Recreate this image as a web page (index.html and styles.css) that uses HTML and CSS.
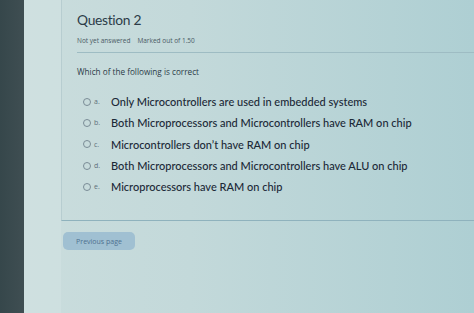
FILE: index.html
```html
<!DOCTYPE html>
<html>
<head>
<meta charset="utf-8">
<link rel="stylesheet" href="styles.css">
</head>
<body>
<div class="page">
  <div class="sidebar"></div>
  <div class="gutter"></div>
  <div class="main">
    <div class="question">
      <h2 class="qtitle">Question 2</h2>
      <div class="meta"><span>Not yet answered</span><span>Marked out of 1.50</span></div>
      <div class="content">
        <p class="prompt">Which of the following is correct</p>
        <ul class="options">
          <li class="opt"><span class="radio"></span><span class="letter">a.</span><span class="label">Only Microcontrollers are used in embedded systems</span></li>
          <li class="opt"><span class="radio"></span><span class="letter">b.</span><span class="label">Both Microprocessors and Microcontrollers have RAM on chip</span></li>
          <li class="opt"><span class="radio"></span><span class="letter">c.</span><span class="label">Microcontrollers don’t have RAM on chip</span></li>
          <li class="opt"><span class="radio"></span><span class="letter">d.</span><span class="label">Both Microprocessors and Microcontrollers have ALU on chip</span></li>
          <li class="opt"><span class="radio"></span><span class="letter">e.</span><span class="label">Microprocessors have RAM on chip</span></li>
        </ul>
      </div>
    </div>
    <div class="nav"><button class="prev">Previous page</button></div>
  </div>
</div>
</body>
</html>
```
FILE: styles.css
```css
html, body { margin: 0; padding: 0; }
body {
  width: 474px; height: 313px; overflow: hidden;
  background: linear-gradient(90deg, #cbdddd 0%, #c3d9da 40%, #aecfd3 100%);
  font-family: "Open Sans", sans-serif;
}
.page { display: flex; height: 313px; }
.sidebar { width: 24px; background: linear-gradient(90deg, #36474b, #3f4e52); flex: none; }
.gutter { width: 37px; flex: none; background: rgba(225,236,236,0.25); }
.main { flex: 1; display: flex; flex-direction: column; }
.question {
  border-left: 1px solid #b7cdd0;
  border-bottom: 1px solid #8fb2bd;
  padding: 11px 0 0 15px;
  height: 221px;
  box-sizing: border-box;
}
.qtitle { margin: 0; font-family: "Lato", sans-serif; font-weight: 400; font-size: 13.8px; letter-spacing: -0.3px; color: #2c3c48; line-height: 18px; }
.meta { margin-top: 7px; font-size: 6.5px; color: #4a5a64; display: flex; gap: 7px; padding-bottom: 7px; border-bottom: 1px solid #9ebcc3; }
.content { padding-top: 13px; }
.prompt { margin: 0; font-size: 8.2px; color: #2c3c48; }
.options { list-style: none; margin: 14px 0 0 0; padding: 0; }
.opt { display: flex; align-items: center; height: 21.3px; }
.radio { width: 6px; height: 6px; border: 1px solid #7a8c96; border-radius: 50%; margin-left: 6px; flex: none; }
.letter { font-size: 7px; color: #5e6f7a; margin-left: 3px; width: 17px; flex: none; }
.label { font-family: "Lato", sans-serif; font-size: 11px; color: #1b2937; font-weight: 500; }
.nav { padding: 11px 0 0 2px; }
.prev {
  display: block;
  font-family: "Open Sans", sans-serif; font-size: 7px; color: #4d7090;
  background: #a0c0d2; border: none; border-radius: 5px;
  width: 72px; height: 18px; padding: 0;
}
```
